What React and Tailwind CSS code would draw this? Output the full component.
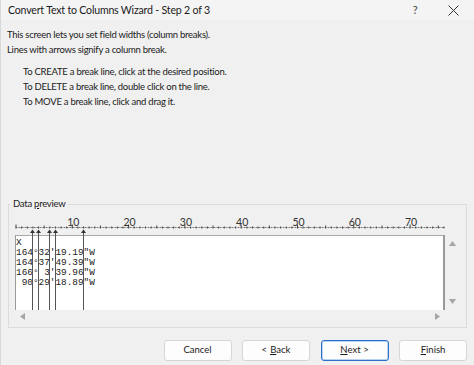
import React from 'react';

const rows = ['X', '164°32\'19.19"W', '164°37\'49.39"W', '166° 3\'39.96"W', ' 90°29\'18.89"W'];
const breaks = [3, 4, 6, 7, 12];
const CW = 5.63;
const tickX = (n) => 1 + n * CW;

const Ruler = () => {
  const ticks = [];
  for (let n = 0; n <= 76; n++) {
    const h = n % 10 === 0 ? 3 : n % 5 === 0 ? 2 : 1;
    ticks.push(<line key={n} x1={tickX(n)} x2={tickX(n)} y1={14.5 - h} y2={15.5} stroke="#444" strokeWidth="1" />);
  }
  return (
    <svg width="432" height="22" className="block">
      <line x1="0.5" x2="430" y1="14.5" y2="14.5" stroke="#777" strokeWidth="1" strokeDasharray="2 1" />
      {ticks}
      {[10, 20, 30, 40, 50, 60, 70].map((n) => (
        <text key={n} x={tickX(n) + 1} y="13" textAnchor="middle" fontSize="10.5" fontFamily="Lato, sans-serif" fill="#333">
          {n}
        </text>
      ))}
    </svg>
  );
};

const Btn = ({ children, primary }) => (
  <button
    className={`w-[68px] h-[21px] rounded-[3px] bg-[#fdfdfd] text-[9.5px] text-[#1b1b1b] flex items-center justify-center ${
      primary ? 'border border-[#2a6fc9] shadow-[inset_0_0_0_1px_#b9d3f0]' : 'border border-[#d6d6d6]'
    }`}
  >
    {children}
  </button>
);

export default function App() {
  return (
    <div className="w-[474px] h-[365px] bg-[#f0f0f0] overflow-hidden font-['Lato',sans-serif] text-[#1b1b1b] border-l border-[#d8d8d8]">
      <div className="h-[20px] bg-[#f4f4f4] flex items-center pl-[7px] text-[10.6px] tracking-[-0.2px]">
        <span className="flex-1 leading-none pt-[1px]">Convert Text to Columns Wizard - Step 2 of 3</span>
        <span className="w-[10px] text-center text-[11px] text-[#444] mr-[28px]">?</span>
        <svg width="11" height="11" viewBox="0 0 11 11" className="mr-[15px]">
          <path d="M0.5 0.5 L10.5 10.5 M10.5 0.5 L0.5 10.5" stroke="#333" strokeWidth="1" />
        </svg>
      </div>

      <div className="pl-[6px] mt-[7px] text-[9.5px] tracking-[-0.26px] leading-[15px]">
        <p>This screen lets you set field widths (column breaks).</p>
        <p>Lines with arrows signify a column break.</p>
      </div>
      <div className="pl-[22px] mt-[7px] text-[9.5px] tracking-[-0.26px] leading-[15px]">
        <p>To CREATE a break line, click at the desired position.</p>
        <p>To DELETE a break line, double click on the line.</p>
        <p>To MOVE a break line, click and drag it.</p>
      </div>

      <div className="relative ml-[7px] mt-[95px] w-[459px] h-[124px] border border-[#dcdcdc] pt-[8px] pl-[6px]">
        <span className="absolute left-[1px] top-[-9px] px-[3px] bg-[#f0f0f0] text-[9.5px] tracking-[-0.25px] leading-[16px]">
          Data <span className="underline">p</span>review
        </span>

        <div className="relative w-[444px]">
          <Ruler />
          <div className="flex h-[75px]">
            <div className="w-[430px] bg-white border-l border-t border-r-2 border-[#9a9a9a] border-t-[#a8a8a8] pt-[2px]">
              {rows.map((r, i) => (
                <div key={i} className="whitespace-pre font-['Liberation_Mono',monospace] text-[9.4px] leading-[10px] text-[#222]">
                  {r}
                </div>
              ))}
            </div>
            <div className="w-[14px] flex flex-col items-center justify-between py-[6px]">
              <svg width="7" height="5" viewBox="0 0 7 5"><path d="M3.5 0 L7 5 L0 5 Z" fill="#a6a6a6" /></svg>
              <svg width="7" height="5" viewBox="0 0 7 5"><path d="M0 0 L7 0 L3.5 5 Z" fill="#a6a6a6" /></svg>
            </div>
          </div>
          <div className="w-[430px] h-[13px] flex items-center justify-between px-[5px]">
            <svg width="5" height="7" viewBox="0 0 5 7"><path d="M0 3.5 L5 0 L5 7 Z" fill="#a6a6a6" /></svg>
            <svg width="5" height="7" viewBox="0 0 5 7"><path d="M5 3.5 L0 0 L0 7 Z" fill="#a6a6a6" /></svg>
          </div>

          <svg width="444" height="97" className="absolute left-0 top-0 pointer-events-none">
            {breaks.map((n) => {
              const xx = Math.round(17.3 + (n - 3) * CW) + 0.5;
              return (
                <g key={n}>
                  <line x1={xx} x2={xx} y1="18" y2="97" stroke="#555" strokeWidth="1" />
                  <path d={`M${xx} 16.5 L${xx + 2.5} 20 L${xx - 2.5} 20 Z`} fill="#333" />
                </g>
              );
            })}
          </svg>
        </div>
      </div>

      <div className="flex justify-end gap-[10.5px] pr-[7px] mt-[12px]">
        <Btn>Cancel</Btn>
        <Btn>&lt; <span className="underline ml-[3px]">B</span>ack</Btn>
        <Btn primary><span className="underline">N</span>ext &gt;</Btn>
        <Btn><span className="underline">F</span>inish</Btn>
      </div>
    </div>
  );
}
